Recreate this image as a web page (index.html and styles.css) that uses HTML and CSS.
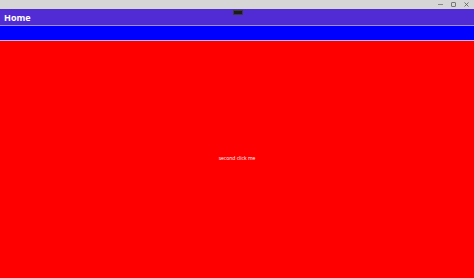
FILE: index.html
```html
<!DOCTYPE html>
<html>
<head>
<meta charset="utf-8">
<link rel="stylesheet" href="styles.css">
</head>
<body>
<div class="window">
  <div class="titlebar">
    <div class="controls">
      <span class="ctl min"></span>
      <span class="ctl max"></span>
      <span class="ctl close">
        <svg width="5" height="5" viewBox="0 0 5 5"><path d="M0.5 0.5L4.5 4.5M4.5 0.5L0.5 4.5" stroke="#555" stroke-width="0.8"/></svg>
      </span>
    </div>
  </div>
  <div class="header">
    <span class="title">Home</span>
    <span class="debug"></span>
  </div>
  <div class="sep sep-purple"></div>
  <div class="blue"></div>
  <div class="sep sep-gray"></div>
  <div class="red">
    <span class="label">second click me</span>
  </div>
</div>
</body>
</html>
```
FILE: styles.css
```css
html, body {
  margin: 0;
  padding: 0;
  width: 474px;
  height: 278px;
  overflow: hidden;
  font-family: "Open Sans", "Liberation Sans", sans-serif;
}
.window {
  display: flex;
  flex-direction: column;
  height: 278px;
}
.titlebar {
  height: 9px;
  background: #d6d6d6;
  display: flex;
  justify-content: flex-end;
  align-items: center;
}
.controls {
  display: flex;
  align-items: center;
  gap: 8px;
  padding-right: 5px;
}
.ctl {
  width: 5px;
  height: 5px;
  display: flex;
  align-items: center;
  justify-content: center;
}
.min::before {
  content: "";
  width: 5px;
  height: 1px;
  background: #888;
}
.max {
  box-sizing: border-box;
  border: 1px solid #777;
  border-radius: 1px;
}
.header {
  height: 16px;
  background: #512bd4;
  display: flex;
  align-items: center;
  position: relative;
}
.title {
  color: #fff;
  font-weight: 700;
  font-size: 9px;
  padding-left: 4px;
  line-height: 1;
}
.debug {
  position: absolute;
  left: 233px;
  top: 1px;
  width: 8px;
  height: 3px;
  background: #1c1c1c;
  border: 1px solid #3a3a3a;
}
.sep {
  height: 1px;
}
.sep-purple { background: #9f8ee6; }
.sep-gray { background: #b8b8e8; }
.blue {
  height: 14px;
  background: #0000ff;
}
.red {
  flex: 1;
  background: #ff0000;
  display: flex;
  align-items: center;
  justify-content: center;
  padding-bottom: 3px;
}
.label {
  color: #fff;
  font-size: 5px;
  line-height: 1;
}
```
